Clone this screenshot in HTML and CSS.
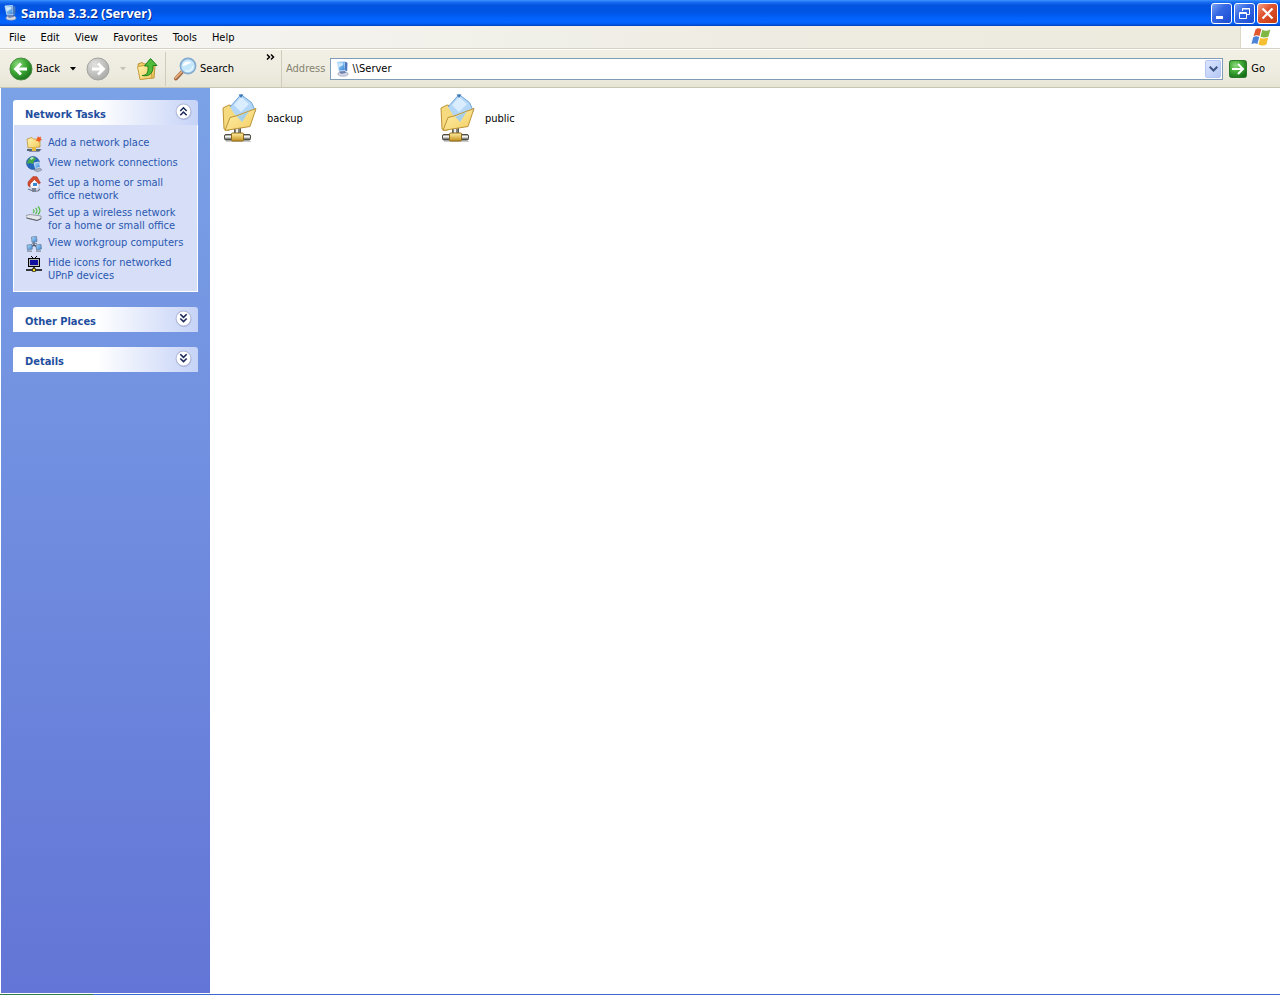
FILE: index.html
```
<!DOCTYPE html>
<html lang="en">
<head>
  <meta charset="UTF-8">
  <title>Samba 3.3.2 (Server)</title>
  <link rel="stylesheet" href="styles.css">
</head>
<body>

<!-- shared gradients and symbols -->
<svg class="defs" width="0" height="0" aria-hidden="true">
  <defs>
    <radialGradient id="green" cx="35%" cy="30%" r="75%">
      <stop offset="0" stop-color="#8fd97f"/>
      <stop offset=".5" stop-color="#3faa36"/>
      <stop offset="1" stop-color="#17701a"/>
    </radialGradient>
    <radialGradient id="grey" cx="35%" cy="30%" r="75%">
      <stop offset="0" stop-color="#e2e2e0"/>
      <stop offset="1" stop-color="#a9a9a7"/>
    </radialGradient>
    <linearGradient id="folder" x1="0" y1="0" x2="1" y2="1">
      <stop offset="0" stop-color="#fff3ae"/>
      <stop offset="1" stop-color="#f3cc62"/>
    </linearGradient>
    <linearGradient id="screen" x1="0" y1="0" x2="1" y2="1">
      <stop offset="0" stop-color="#b9e4ff"/>
      <stop offset="1" stop-color="#2f7fd6"/>
    </linearGradient>
    <linearGradient id="pipe" x1="0" y1="0" x2="0" y2="1">
      <stop offset="0" stop-color="#77776f"/>
      <stop offset=".4" stop-color="#ffffff"/>
      <stop offset="1" stop-color="#2c2c28"/>
    </linearGradient>
    <linearGradient id="joint" x1="0" y1="0" x2="0" y2="1">
      <stop offset="0" stop-color="#fff0a0"/>
      <stop offset="1" stop-color="#c58f1d"/>
    </linearGradient>
    <symbol id="computer" viewBox="0 0 16 16">
      <ellipse cx="9" cy="13" rx="5" ry="2.200" fill="#d5d9e6" stroke="#8790ac" stroke-width=".6"/>
      <path d="M3 1l7.500-.5.8 9-6.300.5z" fill="url(#screen)" stroke="#cfe2f6" stroke-width=".8"/>
      <path d="M10.700.6l2.800 1.200-.3 8.400-2-.8z" fill="#4a76bd"/>
      <path d="M5 10.500l6-.5 1 2-5 1z" fill="#6e80ac"/>
      <path d="M4.200 2.500l4.800-.5.2 2-4.700 2.500z" fill="#e0f4ff" opacity=".8"/>
    </symbol>
    <symbol id="share" viewBox="0 0 36 48">
      <path d="M12.500 30h6v11h-6z" fill="#83837d" stroke="#44443c" stroke-width=".8"/>
      <path d="M14 30h2v10h-2z" fill="#f0f0f0"/>
      <rect x="2.500" y="40.500" width="26" height="5.500" rx="1.500" fill="url(#pipe)" stroke="#4c4c44"/>
      <path d="M4 47.500h25" stroke="#000" opacity=".2"/>
      <rect x="9.500" y="39" width="12" height="8" rx="1" fill="url(#joint)" stroke="#8f6c1b"/>
      <path d="M1 14l6-3 4 1 14-2 3 3v12L6 36.500 2 35z" fill="#f6da80" stroke="#bc9335"/>
      <path d="M19 .5l10.500 8L33 17 20 32 8 13z" fill="#b4d7f7"/>
      <path d="M8 13L19 .5l10.500 8 4 9" fill="none" stroke="#6ea4d8"/>
      <path d="M19 3l8 7-8 8-7-7z" fill="#d9edff"/>
      <path d="M16.500.500h5L19 4z" fill="#3f77b3"/>
      <path d="M3 36.500L8 23.500l6-1.500 4-1.500L34 14.500 28 32.500z" fill="url(#folder)" stroke="#bc9335" stroke-linejoin="round"/>
      <path d="M19 21l8-3.500L20 28l-5-5.500z" fill="#a6cfea"/>
    </symbol>
    <symbol id="chevrons" viewBox="0 0 16 16">
      <circle cx="8.500" cy="9" r="7" fill="#7f8fc5" opacity=".45"/>
      <circle cx="8" cy="8" r="7" fill="#fff" stroke="#b0b9d9"/>
      <path d="M5 4l3 3 3-3M5 8l3 3 3-3" fill="none" stroke="#1c2a5c" stroke-width="1.500"/>
    </symbol>
  </defs>
</svg>

<div class="window">
  <header class="title-bar">
    <svg class="icon16" viewBox="0 0 16 16"><use href="#computer"/></svg>
    <h1>Samba 3.3.2 (Server)</h1>
    <div class="window-buttons">
      <button type="button" aria-label="Minimize">
        <svg viewBox="0 0 19 19"><path d="M4 13.500h7" stroke="#fff" stroke-width="3"/></svg>
      </button>
      <button type="button" aria-label="Restore">
        <svg viewBox="0 0 19 19" fill="none" stroke="#fff"><path d="M7.500 7V4.500h7v6H12M7 5h8"/><path d="M4.500 8.500h7v6h-7zM4 9.500h8"/></svg>
      </button>
      <button type="button" class="close" aria-label="Close">
        <svg viewBox="0 0 19 19"><path d="M4.500 4.500l10 10M14.500 4.500l-10 10" stroke="#fff" stroke-width="2.200"/></svg>
      </button>
    </div>
  </header>

  <div class="menu-bar">
    <nav>
      <button type="button">File</button>
      <button type="button">Edit</button>
      <button type="button">View</button>
      <button type="button">Favorites</button>
      <button type="button">Tools</button>
      <button type="button">Help</button>
    </nav>
    <div class="flag">
      <svg width="20" height="20" viewBox="0 0 20 20">
        <path d="M4.500 2.500C6.500 1 8.500 1 10.300 2.200L8.500 9C6.500 8 4.500 8 2.500 9.200z" fill="#e2582e"/>
        <path d="M11.300 2.800c2.500 1.400 5 1.300 8-.2l-1.800 7c-2.500 1.300-5.200 1.300-8 .2z" fill="#7fb842"/>
        <path d="M2.200 10.300c2-1.200 4-1.200 6-.2L6.400 17c-2-1-4-1-6 .3z" fill="#4c82d8"/>
        <path d="M9.200 10.700c2.500 1.200 5.200 1.200 8-.2l-1.800 7c-2.500 1.300-5.200 1.200-7.900 0z" fill="#f6bf32"/>
      </svg>
    </div>
  </div>

  <div class="toolbars">
    <div class="toolbar">
      <button type="button" class="tool">
        <svg width="24" height="24" viewBox="0 0 24 24">
          <circle cx="12" cy="12" r="11" fill="url(#green)" stroke="#4c8b45"/>
          <path d="M18 12H7M12 6.500L6.500 12l5.500 5.500" fill="none" stroke="#fff" stroke-width="2.800"/>
        </svg>
        Back
      </button>
      <button type="button" class="drop" aria-label="Back history">
        <svg width="6" height="4" viewBox="0 0 6 4"><path d="M0 0h6L3 3.500z" fill="#000"/></svg>
      </button>
      <button type="button" class="tool" aria-label="Forward" disabled>
        <svg width="24" height="24" viewBox="0 0 24 24">
          <circle cx="12" cy="12" r="11" fill="url(#grey)" stroke="#a3a3a0"/>
          <path d="M6 12h11M12 6.500l5.500 5.500-5.500 5.500" fill="none" stroke="#fff" stroke-width="2.800"/>
        </svg>
      </button>
      <button type="button" class="drop" aria-label="Forward history" disabled>
        <svg width="6" height="4" viewBox="0 0 6 4"><path d="M0 0h6L3 3.500z" fill="#c4c2b8"/></svg>
      </button>
      <button type="button" class="tool" aria-label="Up">
        <svg width="22" height="24" viewBox="0 0 22 24">
          <path d="M2 7l4-1.500 2 1.500 8-1 3 3-1 12-13 1z" fill="#f1cf65" stroke="#b7923c"/>
          <path d="M1.500 9.500L12 8l3 2 1 11-12 1.500z" fill="url(#folder)" stroke="#c59d3c"/>
          <path d="M6 18.500c5 0 6.500-3 6-9.500H8.500l6-7.500L21 8.500h-4c.5 7-3 11.500-11 10z" fill="#51bb3b" stroke="#21801d"/>
        </svg>
      </button>
      <button type="button" class="tool search">
        <svg width="24" height="24" viewBox="0 0 24 24">
          <path d="M9 15l-6 6.500" stroke="#9c6540" stroke-width="4" stroke-linecap="round"/>
          <path d="M8.500 15l-6 6" stroke="#e3aa78" stroke-width="2" stroke-linecap="round"/>
          <circle cx="15" cy="9" r="7.600" fill="#c4e7fb" stroke="#83a9cf" stroke-width="1.600"/>
          <path d="M9.500 9c.5-4 5-6 9-3-3 0-5 3-9 3z" fill="#fff"/>
          <path d="M12 14c4 1 7-1 8-5" fill="none" stroke="#e2f6ff" stroke-width="1.500"/>
        </svg>
        Search
      </button>
      <button type="button" class="more" aria-label="More buttons">
        <svg width="9" height="6" viewBox="0 0 9 6"><path d="M1 .5L3.500 3 1 5.500M5 .5L7.500 3 5 5.500" fill="none" stroke="#000" stroke-width="1.500"/></svg>
      </button>
    </div>
    <form class="address-bar">
      <label for="address">Address</label>
      <div class="address-box">
        <svg class="icon16" viewBox="0 0 16 16"><use href="#computer"/></svg>
        <input type="text" id="address" value="\\Server">
        <button type="button" aria-label="Show addresses">
          <svg width="9" height="6" viewBox="0 0 9 6"><path d="M.7.7l3.800 3.800L8.300.7" fill="none" stroke="#3f5684" stroke-width="2"/></svg>
        </button>
      </div>
      <button type="button" class="go">
        <svg width="18" height="18" viewBox="0 0 18 18">
          <rect x=".5" y=".5" width="17" height="17" rx="2" fill="url(#green)" stroke="#2c7a2b"/>
          <path d="M3 9h10M9 4l5 5-5 5" fill="none" stroke="#fff" stroke-width="2"/>
        </svg>
        Go
      </button>
    </form>
  </div>

  <div class="content">
    <aside class="side">
      <section class="panel">
        <header>
          <h2>Network Tasks</h2>
          <button type="button" class="toggle" aria-label="Collapse Network Tasks">
            <svg viewBox="0 0 16 16">
              <circle cx="8.500" cy="9" r="7" fill="#7f8fc5" opacity=".45"/>
              <circle cx="8" cy="8" r="7" fill="#fff" stroke="#b0b9d9"/>
              <path d="M5 7.500l3-3 3 3M5 11.500l3-3 3 3" fill="none" stroke="#1c2a5c" stroke-width="1.500"/>
            </svg>
          </button>
        </header>
        <ul>
          <li>
            <svg class="icon16" viewBox="0 0 16 16">
              <path d="M4 13h12l-3 3H3z" fill="#557" opacity=".6"/>
              <path d="M1 3l5-1.500L7.500 3 14 3v8L2 12z" fill="url(#folder)" stroke="#bf943b" stroke-width=".8"/>
              <path d="M1 14h13" stroke="#536678" stroke-width="2"/>
              <path d="M6 11h4v4H6z" fill="#e5bb41"/>
              <path d="M12 0l1 1.500L15 .5l-.3 2L16 4l-2 .5-1 2-1.200-1.800-2.300.2L11 3z" fill="#f05a20"/>
            </svg>
            <a href="#">Add a network place</a>
          </li>
          <li>
            <svg class="icon16" viewBox="0 0 16 16">
              <circle cx="7" cy="7" r="6.500" fill="#2467bd" stroke="#2a5190" stroke-width=".6"/>
              <path d="M3 3c3-3 6-2 7 0L8 5 7 8 4 7 1.500 8C.8 6 2 4 3 3z" fill="#48a84c"/>
              <path d="M4 2c2-1 3-1 4 0L5 4z" fill="#c0f0cc"/>
              <path d="M8 7l5-1 1.500 5-5 1.500z" fill="url(#screen)" stroke="#dde6f2" stroke-width=".8"/>
              <path d="M8 14l6-2 2 2-5 2z" fill="#a8b2c6" stroke="#68748b" stroke-width=".5"/>
            </svg>
            <a href="#">View network connections</a>
          </li>
          <li>
            <svg class="icon16" viewBox="0 0 16 16">
              <path d="M4 6.500L8 3l5 4v5l-4 1-5-1.500z" fill="#f7f7fb" stroke="#9aa2bd" stroke-width=".6"/>
              <path d="M2 6l5-5.500 4 .3L14.500 7l-2 .8L8.500 3.500 4 8v3L2 9.500z" fill="#d64b2d" stroke="#a02e1c" stroke-width=".5"/>
              <path d="M7 7h4v3H7z" fill="#3c86d2"/>
              <path d="M2 13l5 2h5l2-2" fill="none" stroke="#6d7381" stroke-width="1.200"/>
              <path d="M6 12h4v4H6z" fill="#7b8294"/>
            </svg>
            <a href="#">Set up a home or small office network</a>
          </li>
          <li>
            <svg class="icon16" viewBox="0 0 16 16">
              <path d="M0 9.500l4-1 11 1.500v3l-4 1.500L0 12z" fill="#e6e8ec" stroke="#858b96" stroke-width=".8"/>
              <path d="M1 12l10 2.500 4-2" fill="none" stroke="#5d636e"/>
              <path d="M7 3.500c1.500 1 1.500 2.500 0 3.500M9.500 2c2 1.500 2 4 0 6M12 .5c2.500 2.500 2.500 5.500 0 8" fill="none" stroke="#57b947" stroke-width="1.200"/>
            </svg>
            <a href="#">Set up a wireless network for a home or small office</a>
          </li>
          <li>
            <svg class="icon16" viewBox="0 0 16 16">
              <path d="M8 6v4M3 12l5-3 5 3" fill="none" stroke="#4d5a70" stroke-width="1.500"/>
              <path d="M5.500 1l5-.5.5 5-5 .8z" fill="url(#screen)" stroke="#68809f" stroke-width=".8"/>
              <path d="M1 9l5-.5.3 4.500L1.500 14z" fill="url(#screen)" stroke="#68809f" stroke-width=".8"/>
              <path d="M10 9l5-.5.3 4.500-4.800 1z" fill="url(#screen)" stroke="#68809f" stroke-width=".8"/>
              <path d="M1 15.200h5M10 15.200h5M6 7.500h5" stroke="#7f8ca2" stroke-width="1.200"/>
            </svg>
            <a href="#">View workgroup computers</a>
          </li>
          <li>
            <svg class="icon16" viewBox="0 0 16 16">
              <path d="M5 0l3 3 3-3" fill="none" stroke="#000"/>
              <rect x="2.500" y="2.500" width="11" height="8" fill="#b8b8b8" stroke="#000"/>
              <rect x="4" y="4" width="8" height="5" fill="#1010a0"/>
              <path d="M8 11v2M0 14h16" stroke="#000" stroke-width="1.500"/>
              <path d="M6.500 12.500h3v3h-3z" fill="#f5dc20" stroke="#000" stroke-width=".6"/>
            </svg>
            <a href="#">Hide icons for networked UPnP devices</a>
          </li>
        </ul>
      </section>

      <section class="panel">
        <header>
          <h2>Other Places</h2>
          <button type="button" class="toggle" aria-label="Expand Other Places"><svg viewBox="0 0 16 16"><use href="#chevrons"/></svg></button>
        </header>
      </section>

      <section class="panel">
        <header>
          <h2>Details</h2>
          <button type="button" class="toggle" aria-label="Expand Details"><svg viewBox="0 0 16 16"><use href="#chevrons"/></svg></button>
        </header>
      </section>
    </aside>

    <main class="files">
      <a href="#" class="file"><svg width="36" height="48" viewBox="0 0 36 48"><use href="#share"/></svg>backup</a>
      <a href="#" class="file"><svg width="36" height="48" viewBox="0 0 36 48"><use href="#share"/></svg>public</a>
    </main>
  </div>

  <!-- top edge of the taskbar -->
  <div class="taskbar"></div>
</div>

</body>
</html>
```
FILE: styles.css
```
* {
  margin: 0;
  padding: 0;
  box-sizing: border-box;
}

body {
  font-family: "DejaVu Sans Condensed", "DejaVu Sans", sans-serif;
  font-size: 11px;
  line-height: 13px;
  color: #000;
  background: #fff;
}

button,
input {
  font: inherit;
  color: inherit;
  border: 0;
  background: none;
}

a {
  color: inherit;
  text-decoration: none;
}

svg {
  display: block;
  flex: none;
}

.defs {
  position: absolute;
}

.icon16 {
  width: 16px;
  height: 16px;
}

.window {
  display: flex;
  flex-direction: column;
  height: 100vh;
}

/* title bar */
.title-bar {
  display: flex;
  align-items: center;
  gap: 3px;
  height: 26px;
  padding: 0 2px;
  background: linear-gradient(#3c94ff 0, #1a6ff2 2px, #0355e0 5px, #0054e3 12px, #0262fb 18px, #0364ff 23px, #0142c0 26px);
}

.title-bar h1 {
  flex: 1;
  font-family: "Noto Sans", sans-serif;
  font-size: 13px;
  line-height: 16px;
  color: #fff;
  text-shadow: 1px 1px #0a2a8c;
}

.window-buttons {
  display: flex;
  gap: 2px;
}

.window-buttons button {
  width: 21px;
  height: 21px;
  border: 1px solid #fff;
  border-radius: 3px;
  background: linear-gradient(135deg, #7ba2f2, #3468e4 40%, #1c4bd0);
}

.window-buttons .close {
  background: linear-gradient(135deg, #f0a088, #e1532e 40%, #c23a12);
}

/* menu */
.menu-bar {
  display: flex;
  justify-content: space-between;
  height: 23px;
  border-bottom: 1px solid #d5d2c2;
  background: linear-gradient(90deg, #f7f7f5, #eeece2 60%, #edebdd);
}

.menu-bar nav {
  display: flex;
  gap: 1px;
  padding-left: 2px;
}

.menu-bar nav button {
  padding: 0 7px;
}

.flag {
  display: flex;
  align-items: center;
  justify-content: center;
  width: 40px;
  border-left: 1px solid #dcd9c8;
  background: #fff;
}

/* toolbars */
.toolbars {
  display: flex;
  height: 39px;
  border-top: 1px solid #fff;
  border-bottom: 1px solid #c8c5b2;
  background: linear-gradient(#f2efe4, #eeece0 60%, #e6e5d5);
}

.toolbar {
  display: flex;
  align-items: center;
  width: 282px;
  padding-left: 9px;
  border-right: 1px solid #cfccba;
}

.tool {
  display: flex;
  align-items: center;
  gap: 3px;
}

.drop {
  display: flex;
  justify-content: center;
  width: 26px;
}

.search {
  height: 34px;
  margin-left: 7px;
  padding-left: 7px;
  border-left: 1px solid #cfccba;
}

.more {
  align-self: flex-start;
  margin-left: auto;
  padding: 4px 6px;
}

.address-bar {
  flex: 1;
  display: flex;
  align-items: center;
  padding: 0 15px 0 4px;
}

.address-bar label {
  color: #85836f;
}

.address-box {
  flex: 1;
  display: flex;
  align-items: center;
  height: 22px;
  margin: 0 6px 0 5px;
  padding: 1px 1px 1px 3px;
  border: 1px solid #7f9db9;
  background: #fff;
}

.address-box input {
  flex: 1;
  padding-left: 2px;
  outline: none;
}

.address-box button {
  display: flex;
  align-items: center;
  justify-content: center;
  width: 16px;
  height: 18px;
  border: 1px solid #b4c6f4;
  border-radius: 2px;
  background: linear-gradient(135deg, #dbe5fe, #b5c8f5);
}

.go {
  display: flex;
  align-items: center;
  gap: 4px;
}

/* content */
.content {
  flex: 1;
  display: flex;
  padding: 0 0 1px 1px;
}

.side {
  display: flex;
  flex-direction: column;
  gap: 15px;
  width: 209px;
  padding: 12px;
  background: linear-gradient(#7ba2e7, #6375d6);
}

.panel header {
  display: flex;
  align-items: center;
  justify-content: space-between;
  height: 25px;
  padding: 0 6px 0 12px;
  border-radius: 3px 3px 0 0;
  background: linear-gradient(90deg, #fff 45%, #c6d3f7);
}

.panel h2 {
  padding-top: 3px;
  font-size: 11px;
  color: #1f4fa0;
}

.toggle {
  width: 17px;
  height: 17px;
  margin-bottom: 2px;
}

.panel ul {
  display: flex;
  flex-direction: column;
  gap: 4px;
  padding: 11px 12px 9px;
  list-style: none;
  border: 1px solid #fff;
  border-top: 0;
  background: #d6dff7;
}

.panel li {
  display: flex;
  gap: 6px;
  min-height: 16px;
  color: #2a57b0;
}

.files {
  flex: 1;
  display: flex;
  flex-wrap: wrap;
  align-content: flex-start;
  padding: 6px 12px;
}

.file {
  display: flex;
  align-items: center;
  gap: 9px;
  width: 218px;
}

.taskbar {
  height: 1px;
  background: linear-gradient(90deg, #2f7a4a 93px, #3a69cf 93px);
}
```
